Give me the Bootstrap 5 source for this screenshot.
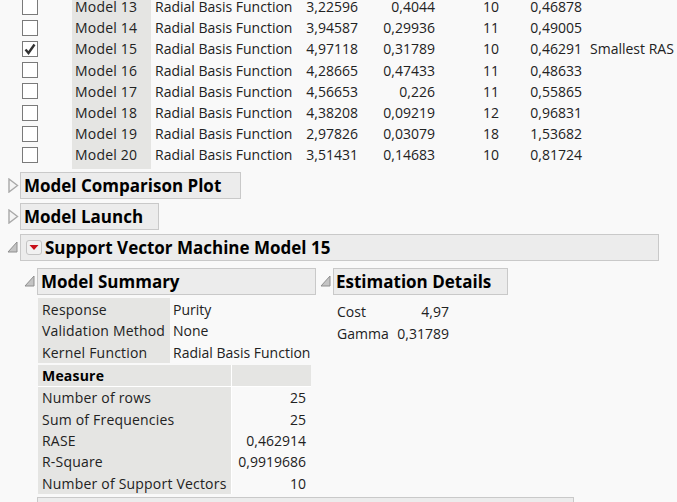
<!DOCTYPE html>
<html>
<head>
    <title>Support Vector Machine Model 15</title>
    <link href="https://cdn.jsdelivr.net/npm/bootstrap@5.3.3/dist/css/bootstrap.min.css" rel="stylesheet">
    <style>
        html, body { height: 502px; overflow: hidden; }
        body { background: #f9f9f9; color: #222; font-family: "Open Sans", "Noto Sans", sans-serif; font-size: 14px; line-height: 21px; }
        .report { width: 677px; height: 502px; overflow: hidden; }
        .grid-tbl { border-collapse: collapse; table-layout: fixed; white-space: nowrap; }
        .grid-tbl td, .grid-tbl th { padding: 0; }
        .models { margin: -4px 0 0 0; width: 677px; }
        .models tr { height: 21.2px; }
        .models tr:last-child { height: 24.2px; }
        .models tr:last-child td { vertical-align: top; }
        .models tr:last-child .chk { margin-top: 2.6px; }
        .chk { display: block; width: 16px; height: 16px; margin-left: 22px; background: #fff; border: 1px solid #7a7a7a; }
        .chk svg { display: block; }
        .label-cell { background: #e5e5e3; letter-spacing: .2px; }
        .models .label-cell { padding-left: 3px; }
        .models .num { text-align: right; }
        .outline-box { background: #ececec; border: 1px solid #c9c9c9; color: #000; font-weight: 700; font-size: 17px; line-height: 25px; height: 27px; padding-left: 3px; white-space: nowrap; }
        .tri { flex: none; display: block; }
        .plot-row { padding-left: 8px; }
        .plot-row .outline-box { margin-left: 1px; }
        .w-plot { width: 221px; }
        .w-launch { width: 139px; }
        .gap-plot { margin-top: 3.4px; }
        .gap-launch { margin-top: 4.5px; }
        .svm-row { margin-top: 3.5px; padding-left: 7px; }
        .svm-row .outline-box { width: 639px; margin-left: 2px; padding-left: 5px; gap: 3px; }
        .red-btn { flex: none; width: 16px; height: 15px; background: #f1f1f1; border: 1px solid #c4c4c4; border-radius: 3px; }
        .red-btn svg { display: block; }
        .sub-area { margin-top: 7px; padding-left: 24px; }
        .w-summary { width: 279px; margin-left: 2px; }
        .w-details { width: 175px; margin-left: 2px; padding-left: 2px; }
        .details-col { margin-left: 4px; }
        .sum-tbl { margin: 3.6px 0 0 14px; width: 275px; }
        .sum-tbl tr { height: 21.5px; }
        .sum-tbl .label-cell { width: 132px; padding-left: 4px; }
        .sum-tbl .val { padding-left: 3px; }
        .meas-tbl { margin: 2.5px 0 0 14px; width: 273px; }
        .meas-tbl .head-row { height: 20px; }
        .meas-tbl .head-row th { border-bottom: 1px solid #fff; color: #000; }
        .meas-tbl .lab { width: 192px; padding-left: 4px; background: #e5e5e3; border-right: 1px solid #fff; letter-spacing: .2px; }
        .meas-tbl .head-val { background: #e5e5e3; }
        .meas-tbl .num { text-align: right; padding-right: 5px; }
        .meas-tbl .body-row { height: 21.3px; }
        .det-tbl { margin: 6px 0 0 17px; }
        .det-tbl tr { height: 21.7px; }
        .det-tbl .dl { width: 58px; }
        .det-tbl .dn { width: 54px; text-align: right; }
        .next-box { height: 10px; width: 537px; margin: 3px 0 0 13px; background: #ececec; border: 1px solid #c9c9c9; }
    </style>
</head>
<body>
    <div class="report">
        <table class="grid-tbl models">
            <colgroup>
                <col style="width:72px"><col style="width:79px"><col style="width:151px"><col style="width:56px">
                <col style="width:77px"><col style="width:64px"><col style="width:83px"><col>
            </colgroup>
            <tbody id="model-rows"></tbody>
        </table>

        <div class="d-flex align-items-center plot-row gap-plot">
            <svg class="tri" width="11" height="15" viewBox="0 0 11 15"><path d="M1 1 L9.5 7.5 L1 14 Z" fill="#f4f4f4" stroke="#a9a9a9" stroke-width="1.4"/></svg>
            <div class="outline-box w-plot">Model Comparison Plot</div>
        </div>
        <div class="d-flex align-items-center plot-row gap-launch">
            <svg class="tri" width="11" height="15" viewBox="0 0 11 15"><path d="M1 1 L9.5 7.5 L1 14 Z" fill="#f4f4f4" stroke="#a9a9a9" stroke-width="1.4"/></svg>
            <div class="outline-box w-launch">Model Launch</div>
        </div>

        <div class="d-flex align-items-center svm-row">
            <svg class="tri" width="11" height="12" viewBox="0 0 11 12"><path d="M10 1 L10 11 L1 11 Z" fill="#c4c4c4" stroke="#8f8f8f"/></svg>
            <div class="outline-box d-flex align-items-center">
                <span class="red-btn"><svg width="14" height="13" viewBox="0 0 14 13"><path d="M2.5 4 H11.5 L7 9 Z" fill="#c8101a"/></svg></span>
                <span>Support Vector Machine Model 15</span>
            </div>
        </div>

        <div class="sub-area">
            <div class="d-flex">
                <div>
                    <div class="d-flex align-items-center">
                        <svg class="tri" width="11" height="12" viewBox="0 0 11 12"><path d="M10 1 L10 11 L1 11 Z" fill="#c4c4c4" stroke="#8f8f8f"/></svg>
                        <div class="outline-box w-summary">Model Summary</div>
                    </div>
                    <table class="grid-tbl sum-tbl">
                        <tr><td class="label-cell">Response</td><td class="val">Purity</td></tr>
                        <tr><td class="label-cell">Validation Method</td><td class="val">None</td></tr>
                        <tr><td class="label-cell">Kernel Function</td><td class="val">Radial Basis Function</td></tr>
                    </table>
                    <table class="grid-tbl meas-tbl">
                        <colgroup><col style="width:193px"><col></colgroup>
                        <tr class="head-row"><th class="lab">Measure</th><th class="head-val"></th></tr>
                        <tr class="body-row"><td class="lab">Number of rows</td><td class="num">25</td></tr>
                        <tr class="body-row"><td class="lab">Sum of Frequencies</td><td class="num">25</td></tr>
                        <tr class="body-row"><td class="lab">RASE</td><td class="num">0,462914</td></tr>
                        <tr class="body-row"><td class="lab">R-Square</td><td class="num">0,9919686</td></tr>
                        <tr class="body-row"><td class="lab">Number of Support Vectors</td><td class="num">10</td></tr>
                    </table>
                </div>
                <div class="details-col">
                    <div class="d-flex align-items-center">
                        <svg class="tri" width="11" height="12" viewBox="0 0 11 12"><path d="M10 1 L10 11 L1 11 Z" fill="#c4c4c4" stroke="#8f8f8f"/></svg>
                        <div class="outline-box w-details">Estimation Details</div>
                    </div>
                    <table class="grid-tbl det-tbl">
                        <tr><td class="dl">Cost</td><td class="dn">4,97</td></tr>
                        <tr><td class="dl">Gamma</td><td class="dn">0,31789</td></tr>
                    </table>
                </div>
            </div>
            <div class="next-box"></div>
        </div>
    </div>

    <script src="https://cdn.jsdelivr.net/npm/bootstrap@5.3.3/dist/js/bootstrap.bundle.min.js"></script>
    <script>
        // Model rows of the fit list
        const models = [
            ['Model 13', '3,22596', '0,4044', '10', '0,46878', ''],
            ['Model 14', '3,94587', '0,29936', '11', '0,49005', ''],
            ['Model 15', '4,97118', '0,31789', '10', '0,46291', 'Smallest RAS'],
            ['Model 16', '4,28665', '0,47433', '11', '0,48633', ''],
            ['Model 17', '4,56653', '0,226', '11', '0,55865', ''],
            ['Model 18', '4,38208', '0,09219', '12', '0,96831', ''],
            ['Model 19', '2,97826', '0,03079', '18', '1,53682', ''],
            ['Model 20', '3,51431', '0,14683', '10', '0,81724', '']
        ];
        const check = '<svg width="14" height="14" viewBox="0 0 14 14"><path d="M2.5 7.5 L5.5 11 L11.5 2.5" fill="none" stroke="#333" stroke-width="2.4"/></svg>';
        document.getElementById('model-rows').innerHTML = models.map(m => `
            <tr>
                <td><span class="chk">${m[5] ? check : ''}</span></td>
                <td class="label-cell">${m[0]}</td>
                <td class="ps-1">Radial Basis Function</td>
                <td class="num">${m[1]}</td>
                <td class="num">${m[2]}</td>
                <td class="num">${m[3]}</td>
                <td class="num">${m[4]}</td>
                <td class="ps-2">${m[5]}</td>
            </tr>`).join('');
    </script>
</body>
</html>
